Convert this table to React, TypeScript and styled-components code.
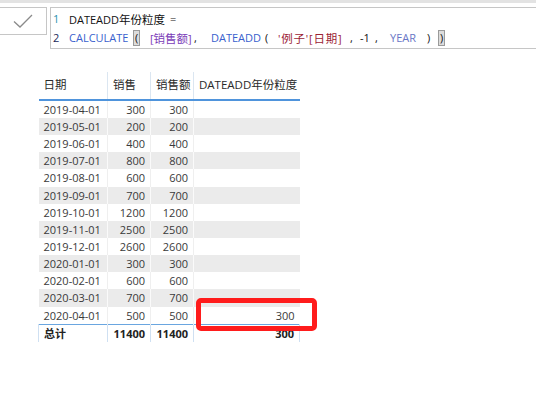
import React from "react";
import styled, { createGlobalStyle } from "styled-components";

const Global = createGlobalStyle`
  html, body { margin: 0; padding: 0; background: #fff; }
  body { font-family: "Open Sans", "Noto Sans CJK SC", sans-serif; color: #333; width: 536px; height: 418px; overflow: hidden; }
  *, *::before, *::after { box-sizing: border-box; }
`;

const Page = styled.div`
  display: flex;
  flex-direction: column;
`;

const TopStrip = styled.div`
  height: 3px;
  background: #e3e3e3;
`;

const FormulaBar = styled.div`
  display: flex;
  gap: 3px;
  margin-top: 4px;
  align-items: flex-start;
`;

const CheckBox = styled.div`
  width: 47px;
  height: 28px;
  border: 1px solid #c6c6c6;
  border-left: none;
  display: flex;
  align-items: center;
  justify-content: center;
  padding-bottom: 1px;
`;

const FormulaBox = styled.div`
  flex: 1;
  height: 42px;
  border: 1px solid #c6c6c6;
  border-right: none;
  padding: 1px 0 0 2px;
  display: flex;
  flex-direction: column;
`;

const CodeLine = styled.div`
  display: flex;
  height: 19px;
  align-items: center;
  font-family: "Open Sans", "Noto Sans CJK SC", sans-serif;
  font-size: 11px;
  white-space: pre;
  color: #111;
`;

const LineNo = styled.span<{ $c: string }>`
  width: 16px;
  font-size: 11px;
  color: ${(p) => p.$c};
`;

const Tok = styled.span<{ $c?: string; $w?: number; $ls?: number }>`
  display: inline-block;
  flex: none;
  width: ${(p) => (p.$w ? `${p.$w}px` : "auto")};
  color: ${(p) => p.$c || "#111"};
  letter-spacing: ${(p) => p.$ls || 0}px;
`;

const Cjk = styled.span`
  font-size: 11.5px;
`;

const Bracket = styled.span`
  display: inline-block;
  background: #dcdcdc;
  outline: 1px solid #9a9a9a;
  outline-offset: -1px;
  padding: 0 2px;
  line-height: 16px;
  color: #111;
`;

const TableWrap = styled.div`
  position: relative;
  margin: 23px 0 0 38px;
  width: 261px;
`;

const Table = styled.table`
  border-collapse: collapse;
  table-layout: fixed;
  width: 261px;
  font-family: "Open Sans", "Noto Sans CJK SC", sans-serif;
  font-size: 11px;
  color: #3a3a3a;
`;

const Th = styled.th<{ $last?: boolean }>`
  height: 28px;
  padding: 0 5px 4px;
  text-align: left;
  font-weight: normal;
  font-size: 11.5px;
  color: #2a2a2a;
  vertical-align: middle;
  border-bottom: 2px solid #4f94dc;
  border-right: ${(p) => (p.$last ? "none" : "1px solid #dbe6f1")};
  white-space: nowrap;
  overflow: visible;
`;

const Tr = styled.tr<{ $alt: boolean }>`
  height: 17.15px;
  background: ${(p) => (p.$alt ? "#ebebeb" : "#fff")};
`;

const Td = styled.td<{ $right?: boolean; $alt: boolean }>`
  padding: 0 5px;
  height: 17.15px;
  line-height: 17px;
  text-align: ${(p) => (p.$right ? "right" : "left")};
  border-right: 1px solid ${(p) => (p.$alt ? "#fafafa" : "#efefef")};
  white-space: nowrap;
  &:last-child { border-right: none; }
`;

const TotalRow = styled.tr`
  height: 17px;
  border-top: 1px solid #6aa6e0;
`;

const TotalTd = styled.td<{ $right?: boolean }>`
  padding: 1px 5px 0;
  height: 17px;
  line-height: 16px;
  font-weight: bold;
  color: #222;
  text-align: ${(p) => (p.$right ? "right" : "left")};
  border-left: 1px solid #cfe0f2;
  border-right: 1px solid #cfe0f2;
  vertical-align: top;
`;

const Highlight = styled.div`
  position: absolute;
  left: 158px;
  top: 226px;
  width: 121px;
  height: 33px;
  border: 5px solid #ff1c1c;
  border-radius: 5px;
  pointer-events: none;
`;

const rows: [string, number, number, string][] = [
  ["2019-04-01", 300, 300, ""],
  ["2019-05-01", 200, 200, ""],
  ["2019-06-01", 400, 400, ""],
  ["2019-07-01", 800, 800, ""],
  ["2019-08-01", 600, 600, ""],
  ["2019-09-01", 700, 700, ""],
  ["2019-10-01", 1200, 1200, ""],
  ["2019-11-01", 2500, 2500, ""],
  ["2019-12-01", 2600, 2600, ""],
  ["2020-01-01", 300, 300, ""],
  ["2020-02-01", 600, 600, ""],
  ["2020-03-01", 700, 700, ""],
  ["2020-04-01", 500, 500, "300"],
];

const BLUE = "#3a5fcd";
const PURPLE = "#7b3db8";
const RED = "#9b2335";
const YEAR = "#6876c6";

export default function App() {
  return (
    <Page>
      <Global />
      <TopStrip />
      <FormulaBar>
        <CheckBox>
          <svg width="20" height="14" viewBox="0 0 20 14">
            <path d="M1 7.5 L7 13 L19 1" fill="none" stroke="#8a8a8a" strokeWidth="1.3" />
          </svg>
        </CheckBox>
        <FormulaBox>
          <CodeLine>
            <LineNo $c="#2b91af">1</LineNo>
            <Tok $w={101}>DATEADD<Cjk>年份粒度</Cjk></Tok>
            <Tok>=</Tok>
          </CodeLine>
          <CodeLine>
            <LineNo $c="#1b2a5a">2</LineNo>
            <Tok $c={BLUE} $w={64}>CALCULATE</Tok>
            <Tok $w={17}><Bracket>(</Bracket></Tok>
            <Tok $c={PURPLE} $w={44}>[<Cjk>销售额</Cjk>]</Tok>
            <Tok $w={17}>,</Tok>
            <Tok $c={BLUE} $w={54}>DATEADD</Tok>
            <Tok $w={13}>(</Tok>
            <Tok $c={RED} $w={72} $ls={0.8}>'<Cjk>例子</Cjk>'[<Cjk>日期</Cjk>]</Tok>
            <Tok $w={10}>,</Tok>
            <Tok $w={15}>-1</Tok>
            <Tok $w={15}>,</Tok>
            <Tok $c={YEAR} $w={37}>YEAR</Tok>
            <Tok $w={11}>)</Tok>
            <Tok><Bracket>)</Bracket></Tok>
          </CodeLine>
        </FormulaBox>
      </FormulaBar>
      <TableWrap>
        <Table>
          <colgroup>
            <col style={{ width: 69 }} />
            <col style={{ width: 43 }} />
            <col style={{ width: 43 }} />
            <col style={{ width: 106 }} />
          </colgroup>
          <thead>
            <tr>
              <Th>日期</Th>
              <Th>销售</Th>
              <Th>销售额</Th>
              <Th $last>DATEADD年份粒度</Th>
            </tr>
          </thead>
          <tbody>
            {rows.map((r, i) => {
              const alt = i % 2 === 1;
              return (
                <Tr key={r[0]} $alt={alt}>
                  <Td $alt={alt}>{r[0]}</Td>
                  <Td $alt={alt} $right>{r[1]}</Td>
                  <Td $alt={alt} $right>{r[2]}</Td>
                  <Td $alt={alt} $right>{r[3]}</Td>
                </Tr>
              );
            })}
            <TotalRow>
              <TotalTd>总计</TotalTd>
              <TotalTd $right>11400</TotalTd>
              <TotalTd $right>11400</TotalTd>
              <TotalTd $right>300</TotalTd>
            </TotalRow>
          </tbody>
        </Table>
        <Highlight />
      </TableWrap>
    </Page>
  );
}
